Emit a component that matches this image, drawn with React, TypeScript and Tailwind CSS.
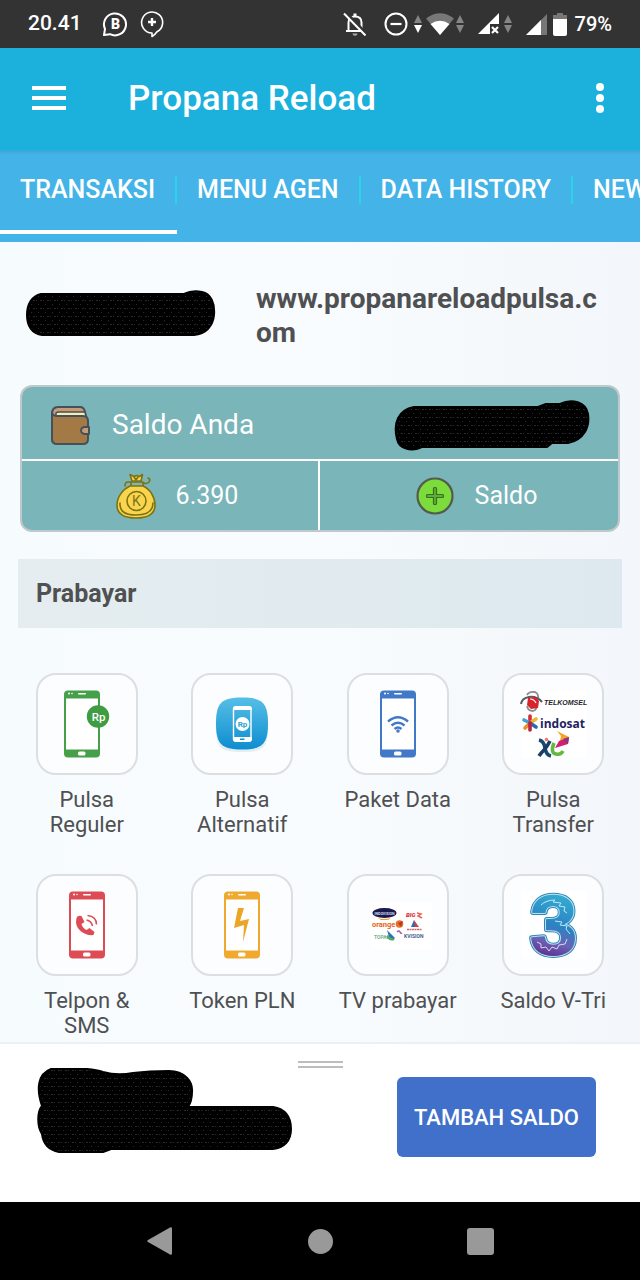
import React, { useState } from 'react';

interface IconProps {
  className?: string;
}

interface PhoneProps {
  color: string;
  children?: React.ReactNode;
}

/* ---------- status bar ---------- */

const Arrows: React.FC<IconProps & { down?: string }> = ({ className, down = '#858585' }) => (
  <svg viewBox="0 0 8 20" className={`h-5 w-2 ${className ?? ''}`} aria-hidden="true">
    <path d="M4 1l4 8H0z" fill="#858585" />
    <path d="M4 19l4-8H0z" fill={down} />
  </svg>
);

const StatusBar: React.FC = () => (
  <div className="flex h-12 items-center bg-[#333333] pl-7 pr-7 text-[21px] font-medium text-white">
    <span>20.41</span>
    <svg viewBox="0 0 26 26" className="ml-5 h-[26px] w-[26px]" fill="none" aria-hidden="true">
      <path d="M2 24l1-6a11 11 0 1 1 5 5.200z" stroke="#fff" strokeWidth="2" strokeLinejoin="round" />
      <text x="13.500" y="18" textAnchor="middle" fontSize="14" fontWeight="900" fill="#fff">B</text>
    </svg>
    <svg viewBox="0 0 24 28" className="ml-3 h-7 w-6" fill="none" aria-hidden="true">
      <path d="M12 26.500v-3.500a10.500 10.500 0 1 1 5-1.200q-2 3-5 4.700z" stroke="#fff" strokeWidth="1.600" strokeLinejoin="round" />
      <path d="M12 8v8M8 12h8" stroke="#fff" strokeWidth="2.400" />
    </svg>
    <div className="ml-auto flex items-center">
      <svg viewBox="0 0 24 24" className="h-6 w-6" fill="none" aria-hidden="true">
        <path d="M5.500 19V10.500C5.500 6.500 8 4.500 12 4.500s6.500 2 6.500 6V19M3 19h18" stroke="#fff" strokeWidth="2" />
        <path d="M10.500 1.500h3v3h-3z" fill="#fff" />
        <path d="M9.500 21.500h5a2.500 2.200 0 0 1-5 0z" fill="#aaa" />
        <path d="M2.500 0l21 22" stroke="#333" strokeWidth="3" />
        <path d="M1 1.500l21.500 22" stroke="#fff" strokeWidth="2" />
      </svg>
      <svg viewBox="0 0 24 24" className="ml-[17px] h-6 w-6" fill="none" stroke="#fff" aria-hidden="true">
        <circle cx="12" cy="12" r="10.500" strokeWidth="2" />
        <path d="M6.500 12h11" strokeWidth="2.200" />
      </svg>
      <Arrows className="ml-[6px]" down="#ffffff" />
      <svg viewBox="0 0 28 22" className="ml-1 h-[22px] w-7" aria-hidden="true">
        <path d="M0 5.500Q14-5 28 5.500L14 22z" fill="#777" />
        <path d="M4.500 11Q14 4.500 23.500 11L14 22z" fill="#fff" />
      </svg>
      <Arrows className="ml-[2px]" />
      <svg viewBox="0 0 22 22" className="ml-[14px] h-[22px] w-[22px]" aria-hidden="true">
        <path d="M0 21L21 0v11h-9v10z" fill="#fff" />
        <path d="M14 14l6 6M20 14l-6 6" stroke="#fff" strokeWidth="2.200" />
      </svg>
      <Arrows className="ml-1" />
      <svg viewBox="0 0 21 21" className="ml-[14px] h-[21px] w-[21px]" aria-hidden="true">
        <path d="M0 21L21 0v21z" fill="#777" />
        <path d="M0 21L15 6v15z" fill="#fff" />
      </svg>
      <svg viewBox="0 0 14 23" className="ml-[6px] h-[23px] w-[14px]" aria-hidden="true">
        <path d="M4 0h6v2h4v5H0V2h4z" fill="#777" />
        <path d="M0 6h14v15a2 2 0 0 1-2 2H2a2 2 0 0 1-2-2z" fill="#fff" />
      </svg>
      <span className="ml-2 text-[20px]">79%</span>
    </div>
  </div>
);

/* ---------- scribbles over the private fields ---------- */

const Scribble: React.FC<{ width: number; height: number; shape: string; className?: string }> = ({
  width,
  height,
  shape,
  className,
}) => {
  const id = `ink-${width}`;
  return (
    <svg width={width} height={height} viewBox={`0 0 ${width} ${height}`} className={className} aria-hidden="true">
      <defs>
        <pattern id={id} width="7" height="8" patternUnits="userSpaceOnUse">
          <rect width="7" height="8" fill="#000" />
          <path d="M0 2.500h2M3 2.500h1M5 6.500h1" stroke="#2a2a2a" strokeWidth="1" />
        </pattern>
      </defs>
      <path d={shape} fill={`url(#${id})`} stroke="#000" strokeWidth="2" strokeLinejoin="round" />
    </svg>
  );
};

/* ---------- balance card icons ---------- */

const WalletIcon: React.FC = () => (
  <svg viewBox="0 0 40 40" className="h-10 w-10" stroke="#46505a" strokeWidth="2" strokeLinejoin="round" aria-hidden="true">
    <path d="M2 9q0-7 6-7h22q4 0 5 5l1 5v22q0 4-4 4H6q-4 0-4-4z" fill="#c79b77" />
    <path d="M6 11V8q1-1 3-1h26l1 5z" fill="#f6edb4" strokeWidth="1.500" />
    <path d="M2 8q1 3 5 3h26q5 0 5 5v18q0 5-5 5H7q-5 0-5-5z" fill="#a37a45" />
    <path d="M39 22h-4a4 3.500 0 0 0 0 7h4z" fill="#c79b77" />
  </svg>
);

const MoneyBagIcon: React.FC = () => (
  <svg viewBox="0 0 40 46" className="h-[46px] w-10" fill="none" stroke="#7a7413" strokeWidth="1.600" strokeLinejoin="round" strokeLinecap="round" aria-hidden="true">
    <path d="M16 8L14 1.500l4 2 2.500-1 3 1 3-2L25 8z" fill="#fbd44f" />
    <path d="M18 4l2 3 2-3" />
    <path d="M12 9h14q4 3 7 0 2-3-1-4M12 9q-3 0-3 4M15 9v4M27 9v4" />
    <path d="M14 13h13c7 3 12 11 12 19 0 9-6 13-19 13S1 41 1 32c0-8 6-16 13-19z" fill="#fbd44f" />
    <circle cx="20.500" cy="28" r="9.500" />
    <path d="M4 30q-1 12 16 12t17-12" />
    <text x="20.500" y="33" textAnchor="middle" fontSize="14" fill="#7a7413" stroke="none">K</text>
  </svg>
);

const PlusIcon: React.FC = () => (
  <svg viewBox="0 0 38 38" className="h-[38px] w-[38px]" aria-hidden="true">
    <circle cx="19" cy="19" r="17.500" fill="#7bdc3b" stroke="#555b4c" strokeWidth="2.200" />
    <path d="M18.500 10.500h1q1 0 1 1v6h6q1 0 1 1v1q0 1-1 1h-6v6q0 1-1 1h-1q-1 0-1-1v-6h-6q-1 0-1-1v-1q0-1 1-1h6v-6q0-1 1-1z" fill="#5cb32c" stroke="#3f6b2b" strokeWidth="1.200" />
  </svg>
);

/* ---------- menu icons, all on a 100 x 100 canvas ---------- */

const Phone: React.FC<PhoneProps> = ({ color, children }) => (
  <>
    <rect x="32" y="16.500" width="36" height="67" rx="4" fill={color} />
    <rect x="34" y="24.500" width="32" height="51" fill="#fff" />
    <rect x="46" y="19" width="8" height="1.400" rx=".7" fill="#fff" />
    <circle cx="37" cy="19.500" r="1" fill="#fff" />
    <circle cx="40" cy="19.500" r=".8" fill="#fff" />
    <rect x="46" y="77.500" width="7.500" height="4" rx="1.500" fill="#fff" />
    {children}
  </>
);

const PulsaRegulerIcon = () => (
  <>
    <g transform="translate(-5 0)">
      <Phone color="#46a04a" />
    </g>
    <circle cx="61" cy="42.500" r="11.200" fill="#3f9c43" />
    <text x="61.500" y="46.500" textAnchor="middle" fontSize="11.500" fontWeight="500" fill="#fff">Rp</text>
  </>
);

const PulsaAlternatifIcon = () => (
  <>
    <defs>
      <linearGradient id="alt" x1="0" y1="0" x2="0" y2="1">
        <stop offset="0" stopColor="#56bfe6" />
        <stop offset="1" stopColor="#0d8dd0" />
      </linearGradient>
    </defs>
    <path d="M50 26c22 0 26 4 26 26s-4 26-26 26-26-4-26-26 4-26 26-26z" fill="#e6edf1" />
    <path d="M50 23.500c21 0 26 6 26 26s-5 26-26 26-26-6-26-26 5-26 26-26z" fill="url(#alt)" />
    <rect x="41.500" y="33" width="17.500" height="34" rx="2.500" fill="none" stroke="#fff" strokeWidth="1.400" />
    <path d="M41 35q0-3 3-3h13q3 0 3 3v1H41zM41 63h19v2q0 3-3 3H44q-3 0-3-3z" fill="#fff" />
    <rect x="48" y="64.500" width="4.500" height="1.500" fill="#168fcf" />
    <circle cx="50.500" cy="50" r="7" fill="#fff" />
    <text x="50.500" y="52.800" textAnchor="middle" fontSize="8" fontWeight="700" fill="#2c9fd8">Rp</text>
  </>
);

const PaketDataIcon = () => (
  <Phone color="#4179c8">
    <g fill="none" stroke="#4179c8" strokeWidth="2.400">
      <path d="M40 47.500q10-8.500 20 0" />
      <path d="M43.500 51.500q6.500-5.500 13 0" />
      <path d="M46.500 55q3.500-3 7 0" />
    </g>
    <circle cx="50" cy="57" r="1.800" fill="#4179c8" />
  </Phone>
);

const PulsaTransferIcon = () => (
  <>
    <rect x="18" y="16" width="66" height="68" fill="#fff" />
    <path d="M24 21q2-4 8-3 4 2 3 7M24 32q1 5 6 5 4-1 3-5" fill="none" stroke="#8b8f94" strokeWidth="1.800" />
    <path d="M18 30q1-6 8-7 8-1 13 5" fill="none" stroke="#575b60" strokeWidth="2" />
    <path d="M25 24l8-1 3 4-1 7-7 1-4-4z" fill="#d8232a" />
    <path d="M27 25q4 0 6 4" fill="none" stroke="#fff" strokeWidth="1.200" />
    <text x="41" y="31" fontSize="7" fontWeight="700" fontStyle="italic" fontFamily="Liberation Sans, sans-serif" fill="#26262b">TELKOMSEL</text>
    <g strokeWidth="3.600" strokeLinecap="round">
      <path d="M27 49v-7" stroke="#d7293a" />
      <path d="M27 49l6-4" stroke="#f2b527" />
      <path d="M27 49l-6-3" stroke="#3fa3d9" />
      <path d="M27 49l-5 5" stroke="#f08a24" />
      <path d="M27 49l6 4" stroke="#2a69b0" />
      <path d="M27 49v7" stroke="#b92342" />
    </g>
    <text x="37" y="53.500" fontSize="12" fontWeight="700" fontFamily="Open Sans, sans-serif" fill="#1e2460">indosat</text>
    <g fill="none" strokeWidth="3.600">
      <path d="M36 66q5 1 6 8t6 8" stroke="#164a73" />
      <path d="M47 67q-3 6-6 9t-5 6" stroke="#1b3d66" />
      <path d="M51 69q-4 10 2 11 5 1 7-3" stroke="#63b944" />
    </g>
    <circle cx="43.500" cy="65.500" r="1.800" fill="#f0796b" />
    <path d="M54 57l12 6-9 4 1-5z" fill="#f5a427" />
    <path d="M66 63l-1 7-13 4 4-7z" fill="#cf2171" />
    <path d="M66 63l-1 7-5-5z" fill="#87357f" />
  </>
);

const TelponIcon = () => (
  <Phone color="#dd4c55">
    <path d="M39.500 43q-2 8 4 13t13 4l1-3-5-4-3 2q-4-2-5-6l3-2-3-6q-4-1-5 2z" fill="#dd4c55" />
    <g fill="none" stroke="#dd4c55" strokeWidth="1.500">
      <path d="M49.500 45q5 1 6 6" />
      <path d="M50.500 40.500q9 1 9 9" />
    </g>
  </Phone>
);

const TokenIcon = () => (
  <Phone color="#efa92e">
    <path d="M46 33h6l-4 13 9-2-6 23 1-17-10 3z" fill="#eca527" />
  </Phone>
);

const TvIcon = () => (
  <>
    <rect x="22" y="28" width="62" height="46" fill="#fff" />
    <ellipse cx="36.500" cy="38" rx="12" ry="5" fill="#19194e" />
    <path d="M30 43q6 2 13 0l-3 2h-7z" fill="#f0a12c" />
    <text x="36.500" y="39.500" textAnchor="middle" fontSize="3.600" fontWeight="700" fill="#d9dcf0">INDOVISION</text>
    <text x="58" y="42" fontSize="6" fontWeight="900" fontStyle="italic" fill="#dd2d35">BIG</text>
    <path d="M69 38l4 1-3 2 4 2" fill="none" stroke="#e8604d" strokeWidth="1.500" />
    <text x="24" y="52" fontSize="7.500" fontWeight="700" fill="#e65f23">orange</text>
    <circle cx="51.500" cy="49" r="3.800" fill="#e8702a" />
    <path d="M50 48l5-2-2 6" fill="#b83a20" />
    <path d="M66 45l-3 7h6z" fill="#246cb4" />
    <path d="M66 45l1 7h4z" fill="#d93d46" />
    <path d="M59 54.500h15" stroke="#c96870" strokeWidth="1.300" strokeDasharray="2 .5" />
    <text x="26" y="63.500" fontSize="5" fontWeight="700" fill="#6fb390">TOPAS</text>
    <path d="M39 55l8 8-2 2-4-3z" fill="#2977b3" />
    <path d="M39 61q3 5 7 3" fill="none" stroke="#51a952" strokeWidth="2" />
    <path d="M49 57q2-2 3 0t2 1" fill="none" stroke="#a75da1" strokeWidth="1.500" />
    <text x="56" y="62.500" fontSize="5" fontWeight="700" fill="#405e91">KVISION</text>
  </>
);

const TriIcon = () => (
  <>
    <defs>
      <linearGradient id="tri" gradientUnits="userSpaceOnUse" x1="60" y1="16" x2="42" y2="84">
        <stop offset="0" stopColor="#35b1d3" />
        <stop offset=".5" stopColor="#2b83c4" />
        <stop offset=".75" stopColor="#6a62b4" />
        <stop offset="1" stopColor="#602389" />
      </linearGradient>
    </defs>
    <rect x="18" y="16" width="66" height="68" fill="#fff" />
    <g textAnchor="middle" fontSize="84" fontWeight="700" strokeLinejoin="round" fontFamily="Liberation Sans, sans-serif">
      <text x="50.500" y="79" fill="url(#tri)" stroke="#2b86b8" strokeWidth="6">3</text>
      <text x="50.500" y="79" fill="url(#tri)" stroke="#b9e3ef" strokeWidth="4">3</text>
      <text x="50.500" y="79" fill="url(#tri)" stroke="url(#tri)" strokeWidth="2">3</text>
    </g>
    <path d="M38 30q5-5 14-5l-2 2 8 1-2 3 6 1-1 4 3 2" fill="none" stroke="#bfe9f4" strokeWidth="1" />
    <path d="M52 46l7 1-2 3 7 1-1 3 4 5" fill="none" stroke="#bfe9f4" strokeWidth="1" />
    <path d="M34 67l4 2v4l5-1 3 4 3-4 5 2 2-4 6-1 2-5" fill="none" stroke="#dcd6f2" strokeWidth="1" />
  </>
);

const menuItems: { name: string; Icon: React.FC }[] = [
  { name: 'Pulsa Reguler', Icon: PulsaRegulerIcon },
  { name: 'Pulsa Alternatif', Icon: PulsaAlternatifIcon },
  { name: 'Paket Data', Icon: PaketDataIcon },
  { name: 'Pulsa Transfer', Icon: PulsaTransferIcon },
  { name: 'Telpon & SMS', Icon: TelponIcon },
  { name: 'Token PLN', Icon: TokenIcon },
  { name: 'TV prabayar', Icon: TvIcon },
  { name: 'Saldo V-Tri', Icon: TriIcon },
];

const tabs = ['TRANSAKSI', 'MENU AGEN', 'DATA HISTORY', 'NEWS'];

const App: React.FC = () => {
  const [activeTab, setActiveTab] = useState(tabs[0]);

  return (
    <div className="flex min-h-screen flex-col overflow-x-hidden bg-white font-[Roboto,sans-serif] text-[#4f5052]">
      <StatusBar />

      {/* App bar */}
      <header className="flex h-[102px] items-center bg-[#1cb1dd] pl-8 pr-7 text-white">
        <button aria-label="Open menu" className="flex w-[34px] flex-col gap-[6px] pb-[2px]">
          <span className="h-1 w-full bg-white" />
          <span className="h-1 w-full bg-white" />
          <span className="h-1 w-full bg-white" />
        </button>
        <h1 className="ml-[62px] text-[35px] font-medium">Propana Reload</h1>
        <button aria-label="More options" className="ml-auto flex w-6 flex-col items-center gap-[3px] pb-[2px]">
          <span className="h-2 w-2 rounded-full bg-white" />
          <span className="h-2 w-2 rounded-full bg-white" />
          <span className="h-2 w-2 rounded-full bg-white" />
        </button>
      </header>

      {/* Tabs */}
      <nav className="flex h-[92px] overflow-hidden bg-[#43b3e8] bg-linear-to-b from-[#3ba5d6] to-[#43b3e8] to-5% pb-2">
        {tabs.map((tab, i) => (
          <button
            key={tab}
            onClick={() => setActiveTab(tab)}
            className={`flex shrink-0 items-center border-b-4 ${activeTab === tab ? 'border-white' : 'border-transparent'}`}
          >
            <span className="px-5 text-[25px] font-medium text-white">{tab}</span>
            {i < tabs.length - 1 && <span className="h-7 w-[2px] bg-[#2ad4ea]" />}
          </button>
        ))}
      </nav>

      <main className="flex-1 bg-linear-to-r from-[#f6fbfe] via-[#f9fcfe] to-[#f3f6fa]">
        <div className="flex items-start pl-[26px] pr-8 pt-10">
          <Scribble
            width={190}
            height={48}
            className="mt-2 shrink-0"
            shape="M15 4H158Q166 0 176 2C185 4 189 13 188 25C187 36 180 44 168 45H16C6 44 1 36 1 25C1 14 6 6 15 4z"
          />
          <a href="#" className="ml-10 block text-[28px] font-bold leading-[34px] break-all">
            www.propanareloadpulsa.com
          </a>
        </div>

        {/* Balance */}
        <section className="mx-5 mt-[35px] overflow-hidden rounded-xl border-2 border-[#bfc8ca] bg-[#79b5b9] text-white">
          <div className="flex h-[74px] items-center border-b-2 border-white pl-7 pr-7 pt-1">
            <WalletIcon />
            <span className="ml-[22px] text-[28px]">Saldo Anda</span>
            <Scribble
              width={196}
              height={52}
              className="ml-auto"
              shape="M20 8H144L152 5H166C178-1 192 3 194 15C196 28 190 41 174 44H158L153 48H28C17 53 5 50 3 40C-1 24 4 11 20 8z"
            />
          </div>
          <div className="grid grid-cols-2">
            <div className="flex h-[69px] items-center justify-center gap-3 border-r-2 border-white pl-[6px] text-[25px]">
              <span className="flex w-14 justify-center">
                <MoneyBagIcon />
              </span>
              6.390
            </div>
            <button className="flex items-center justify-center gap-3 pl-[6px] text-[25px]">
              <span className="flex w-14 justify-center">
                <PlusIcon />
              </span>
              Saldo
            </button>
          </div>
        </section>

        {/* Prepaid products */}
        <h2 className="mx-[18px] mt-[27px] flex h-[69px] items-center bg-linear-to-r from-[#e5edf0] to-[#dde9ef] px-[18px] text-[25px] font-bold">
          Prabayar
        </h2>
        <div className="grid grid-cols-4 gap-y-[37px] px-[9px] pb-1 pt-[45px]">
          {menuItems.map(({ name, Icon }) => (
            <button key={name} className="flex flex-col items-center">
              <span className="flex h-[102px] w-[102px] items-center justify-center rounded-[20px] border-2 border-[#dcdfe2] bg-[#fcfdfe]">
                <svg viewBox="0 0 100 100" className="h-[100px] w-[100px] shrink-0" aria-hidden="true">
                  <Icon />
                </svg>
              </span>
              <span className="mt-3 w-[120px] text-[22px] leading-[25px]">{name}</span>
            </button>
          ))}
        </div>
      </main>

      {/* Bottom sheet */}
      <section className="flex h-[160px] flex-col border-t-2 border-[#eeeff1] bg-white">
        <div className="mx-auto mt-[17px] h-[7px] w-[45px] border-y-2 border-[#bdbdbd]" />
        <div className="flex items-start justify-between pl-[37px] pr-11">
          <Scribble
            width={256}
            height={86}
            shape="M14 1H50Q60 2 66 4Q80 8 96 5Q112 3 132 3C148 3 156 14 155 24Q155 33 151 39H236C248 41 254 49 254 61C254 73 247 80 236 81H74L66 84H22C11 82 6 75 5 66C0 58 0 44 5 38C-1 20 1 6 14 1z"
          />
          <button className="mt-[9px] h-20 rounded-[6px] bg-[#4070ca] px-[17px] text-[22px] font-medium text-white">
            TAMBAH SALDO
          </button>
        </div>
      </section>

      {/* System navigation */}
      <footer className="grid h-[78px] grid-cols-3 items-center bg-black px-20">
        <button aria-label="Back" className="flex justify-center">
          <svg viewBox="0 0 26 28" className="h-7 w-[26px]" fill="#999" aria-hidden="true">
            <path d="M1 13L23 .5q2-1 2 1v25q0 2-2 1L1 15q-1.500-1 0-2z" />
          </svg>
        </button>
        <button aria-label="Home" className="flex justify-center">
          <span className="h-[25px] w-[25px] rounded-full bg-[#999999]" />
        </button>
        <button aria-label="Recent apps" className="flex justify-center">
          <span className="h-[27px] w-[27px] rounded-[3px] bg-[#999999]" />
        </button>
      </footer>
    </div>
  );
};

export default App;
